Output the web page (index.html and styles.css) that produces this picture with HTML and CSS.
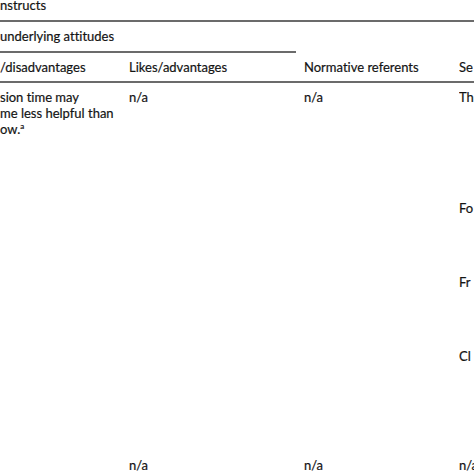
FILE: index.html
```html
<!DOCTYPE html>
<html>
<head>
<meta charset="utf-8">
<link rel="stylesheet" href="styles.css">
</head>
<body>
<div class="page">
  <div class="row-title"><span class="txt">nstructs</span></div>
  <div class="row-group">
    <div class="group-cell"><span class="txt">underlying attitudes</span></div>
  </div>
  <div class="row-head">
    <div class="c c1">/disadvantages</div>
    <div class="c c2">Likes/advantages</div>
    <div class="c c3">Normative referents</div>
    <div class="c c4">Se</div>
  </div>
  <div class="row-data">
    <div class="c c1">sion time may<br>me less helpful than<br>ow.<sup>a</sup></div>
    <div class="c c2">n/a</div>
    <div class="c c3">n/a</div>
    <div class="c c4 stack">
      <div class="item">Th</div>
      <div class="item fo">Fo</div>
      <div class="item fr">Fr</div>
      <div class="item cl">Cl</div>
    </div>
  </div>
  <div class="row-data2">
    <div class="c c1"></div>
    <div class="c c2">n/a</div>
    <div class="c c3">n/a</div>
    <div class="c c4">n/a</div>
  </div>
</div>
</body>
</html>
```
FILE: styles.css
```css
html, body {
  margin: 0;
  padding: 0;
  background: #fff;
  overflow: hidden;
}
body {
  width: 474px;
  height: 474px;
  font-family: "Lato", "Open Sans", sans-serif;
  font-size: 13px;
  line-height: 16px;
  color: #141414;
  font-variant-ligatures: none;
  -webkit-text-stroke: 0.2px #141414;
}
.page {
  width: 474px;
}
.row-title {
  height: 20px;
  line-height: 10px;
  border-bottom: 2px solid #6b6b6b;
}
.row-group {
  padding-top: 6px;
}
.group-cell {
  width: 296px;
  padding-bottom: 7px;
  border-bottom: 2px solid #6b6b6b;
}
.row-head {
  display: grid;
  grid-template-columns: 129px 175px 155px 1fr;
  padding-top: 6px;
  padding-bottom: 6px;
  border-bottom: 2px solid #6b6b6b;
  white-space: nowrap;
}
.row-data,
.row-data2 {
  display: grid;
  grid-template-columns: 129px 175px 155px 1fr;
  white-space: nowrap;
}
.row-data {
  padding-top: 6px;
}
.row-data2 {
  padding-top: 93px;
}
.c {
  overflow: hidden;
}
.c1 sup {
  font-size: 8px;
  line-height: 0;
  vertical-align: 5px;
}
.stack {
  display: flex;
  flex-direction: column;
}
.fo { margin-top: 95px; }
.fr { margin-top: 58px; }
.cl { margin-top: 58px; }
```
